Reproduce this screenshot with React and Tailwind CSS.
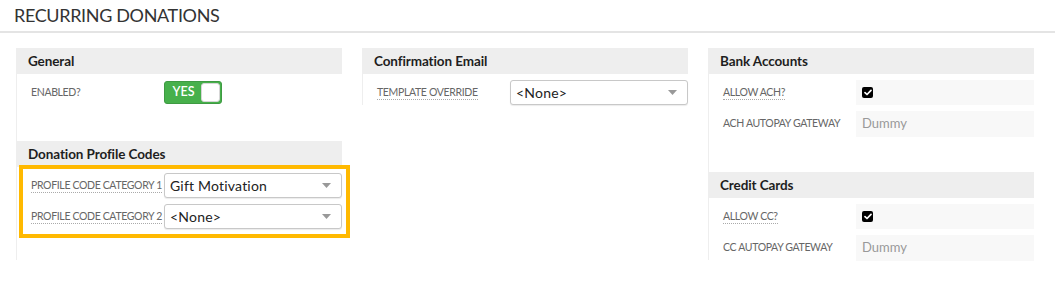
import React from "react";

function Label({ children, dotted }) {
  return (
    <div className="w-[147px] shrink-0 pl-[14px] flex items-center">
      <span
        className={
          "text-[10.5px] leading-[13px] text-[#666] uppercase tracking-[-0.35px] whitespace-nowrap " +
          (dotted ? "border-b border-dotted border-[#aaa]" : "")
        }
      >
        {children}
      </span>
    </div>
  );
}

function Select({ value }) {
  return (
    <div className="flex-1 h-[25px] bg-white border border-[#c8c8c8] rounded-[3px] shadow-[0_1px_1px_rgba(0,0,0,0.08)] flex items-center justify-between pl-[5px] pr-[10px]">
      <span className="text-[14px] tracking-[0.2px] text-[#222]">{value}</span>
      <svg width="9" height="5" viewBox="0 0 9 5">
        <path d="M0 0 L9 0 L4.5 5 Z" fill="#999" />
      </svg>
    </div>
  );
}

function Toggle() {
  return (
    <div className="w-[58px] h-[23px] rounded-[3px] bg-[#47b04b] border border-[#3e9a42] flex items-center p-[1px]">
      <span className="flex-1 text-center text-white text-[12.5px] font-semibold leading-none">YES</span>
      <span className="w-[19px] h-[19px] bg-white rounded-[3px] border border-[#d6d6d6]" />
    </div>
  );
}

function Check() {
  return (
    <span className="w-[11px] h-[11px] rounded-[2px] bg-black flex items-center justify-center">
      <svg width="8" height="7" viewBox="0 0 8 7">
        <path d="M1 3.6 L3 5.5 L7 1.3" stroke="#fff" strokeWidth="1.7" fill="none" strokeLinecap="round" strokeLinejoin="round" />
      </svg>
    </span>
  );
}

function ReadValue({ children }) {
  return (
    <div className="flex-1 h-[26px] bg-[#f8f8f8] flex items-center pl-[6px] text-[13px] text-[#999]">
      {children}
    </div>
  );
}

function Row({ children }) {
  return <div className="flex h-[25px] items-stretch">{children}</div>;
}

function Section({ title, children, last }) {
  return (
    <div className={last ? "" : "pb-[36px]"}>
      <div className="h-[26px] bg-[#eeeeee] flex items-center pl-[11px] text-[13.5px] font-bold text-[#1e1e1e] tracking-[-0.1px]">
        {title}
      </div>
      <div className="pt-[6px] flex flex-col gap-[6px]">{children}</div>
    </div>
  );
}

export default function App() {
  return (
    <div className="w-[1055px] h-[282px] bg-white relative font-['Lato',sans-serif]">
      <div className="h-[33px] border-b-2 border-[#e4e4e4] pl-[14px] pt-[3px] text-[18px] leading-[24px] tracking-[-0.35px] text-[#333]">
        RECURRING DONATIONS
      </div>
      <div className="flex gap-[20px] pl-[16px] pt-[15px]">
        <div className="w-[326px] border-l border-[#eeeeee]">
          <Section title="General">
            <Row>
              <Label>Enabled?</Label>
              <div className="flex items-center">
                <Toggle />
              </div>
            </Row>
          </Section>
          <Section title="Donation Profile Codes" last>
            <Row>
              <Label dotted>Profile Code Category 1</Label>
              <Select value="Gift Motivation" />
            </Row>
            <Row>
              <Label dotted>Profile Code Category 2</Label>
              <Select value="<None>" />
            </Row>
          </Section>
        </div>
        <div className="w-[326px] border-l border-[#eeeeee] self-start">
          <Section title="Confirmation Email" last>
            <Row>
              <Label dotted>Template Override</Label>
              <Select value="<None>" />
            </Row>
          </Section>
        </div>
        <div className="w-[326px] border-l border-[#eeeeee] self-start">
          <Section title="Bank Accounts">
            <Row>
              <Label dotted>Allow ACH?</Label>
              <div className="flex-1 bg-[#f8f8f8] flex items-center pl-[6px]">
                <Check />
              </div>
            </Row>
            <Row>
              <Label>ACH Autopay Gateway</Label>
              <ReadValue>Dummy</ReadValue>
            </Row>
          </Section>
          <Section title="Credit Cards" last>
            <Row>
              <Label dotted>Allow CC?</Label>
              <div className="flex-1 bg-[#f8f8f8] flex items-center pl-[6px]">
                <Check />
              </div>
            </Row>
            <Row>
              <Label>CC Autopay Gateway</Label>
              <ReadValue>Dummy</ReadValue>
            </Row>
          </Section>
        </div>
      </div>
      <div className="absolute left-[19px] top-[165px] w-[331px] h-[73px] border-[4px] border-[#ffb900] pointer-events-none" />
    </div>
  );
}
